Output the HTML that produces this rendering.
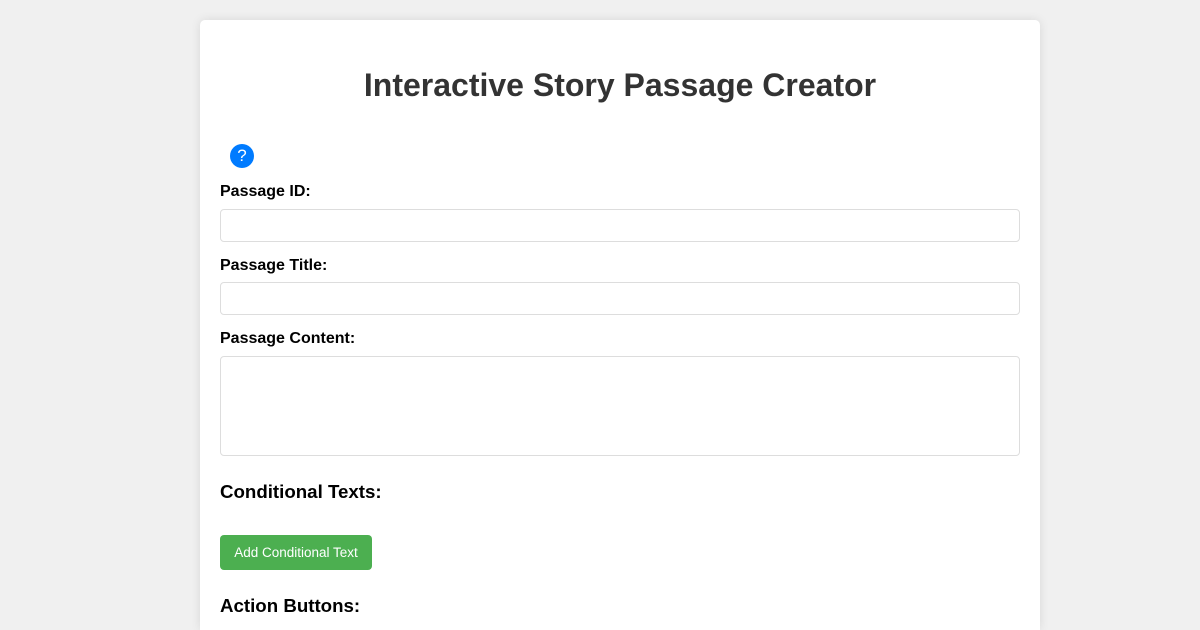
<!DOCTYPE html>
<html style="overflow:hidden;height:630px"><head><style>
body{margin:0;background:#f0f0f0;font-family:"Liberation Sans",Arial,sans-serif;width:1200px;height:630px;overflow:hidden;position:relative}
.c{position:absolute;left:200px;top:20px;width:840px;height:610px;background:#fff;border-radius:5px 5px 0 0;box-shadow:0 0 10px rgba(0,0,0,.1)}
h1{position:absolute;left:0;width:840px;top:47px;margin:0;text-align:center;font-size:32px;color:#333;font-weight:bold}
.q{position:absolute;left:30px;top:124px;width:24px;height:24px;border-radius:50%;background:#007bff;color:#fff;font-size:17px;text-align:center;line-height:23px}
.l{position:absolute;left:20px;font-weight:bold;font-size:16px;color:#000}
.i{position:absolute;left:20px;width:798px;border:1px solid #ddd;border-radius:4px;background:#fff}
h3{position:absolute;left:20px;margin:0;font-size:18.7px;font-weight:bold}
.b{position:absolute;left:20px;top:515px;width:152px;height:35px;background:#4caf50;color:#fff;border-radius:4px;font-size:13.5px;text-align:center;line-height:35px}
</style></head><body><div class="c">
<h1>Interactive Story Passage Creator</h1>
<div class="q">?</div>
<div class="l" style="top:163px">Passage ID:</div>
<div class="i" style="top:189px;height:31px"></div>
<div class="l" style="top:237px">Passage Title:</div>
<div class="i" style="top:262px;height:31px"></div>
<div class="l" style="top:310px">Passage Content:</div>
<div class="i" style="top:336px;height:98px"></div>
<h3 style="top:461px">Conditional Texts:</h3>
<div class="b">Add Conditional Text</div>
<h3 style="top:575px">Action Buttons:</h3>
</div></body></html>
